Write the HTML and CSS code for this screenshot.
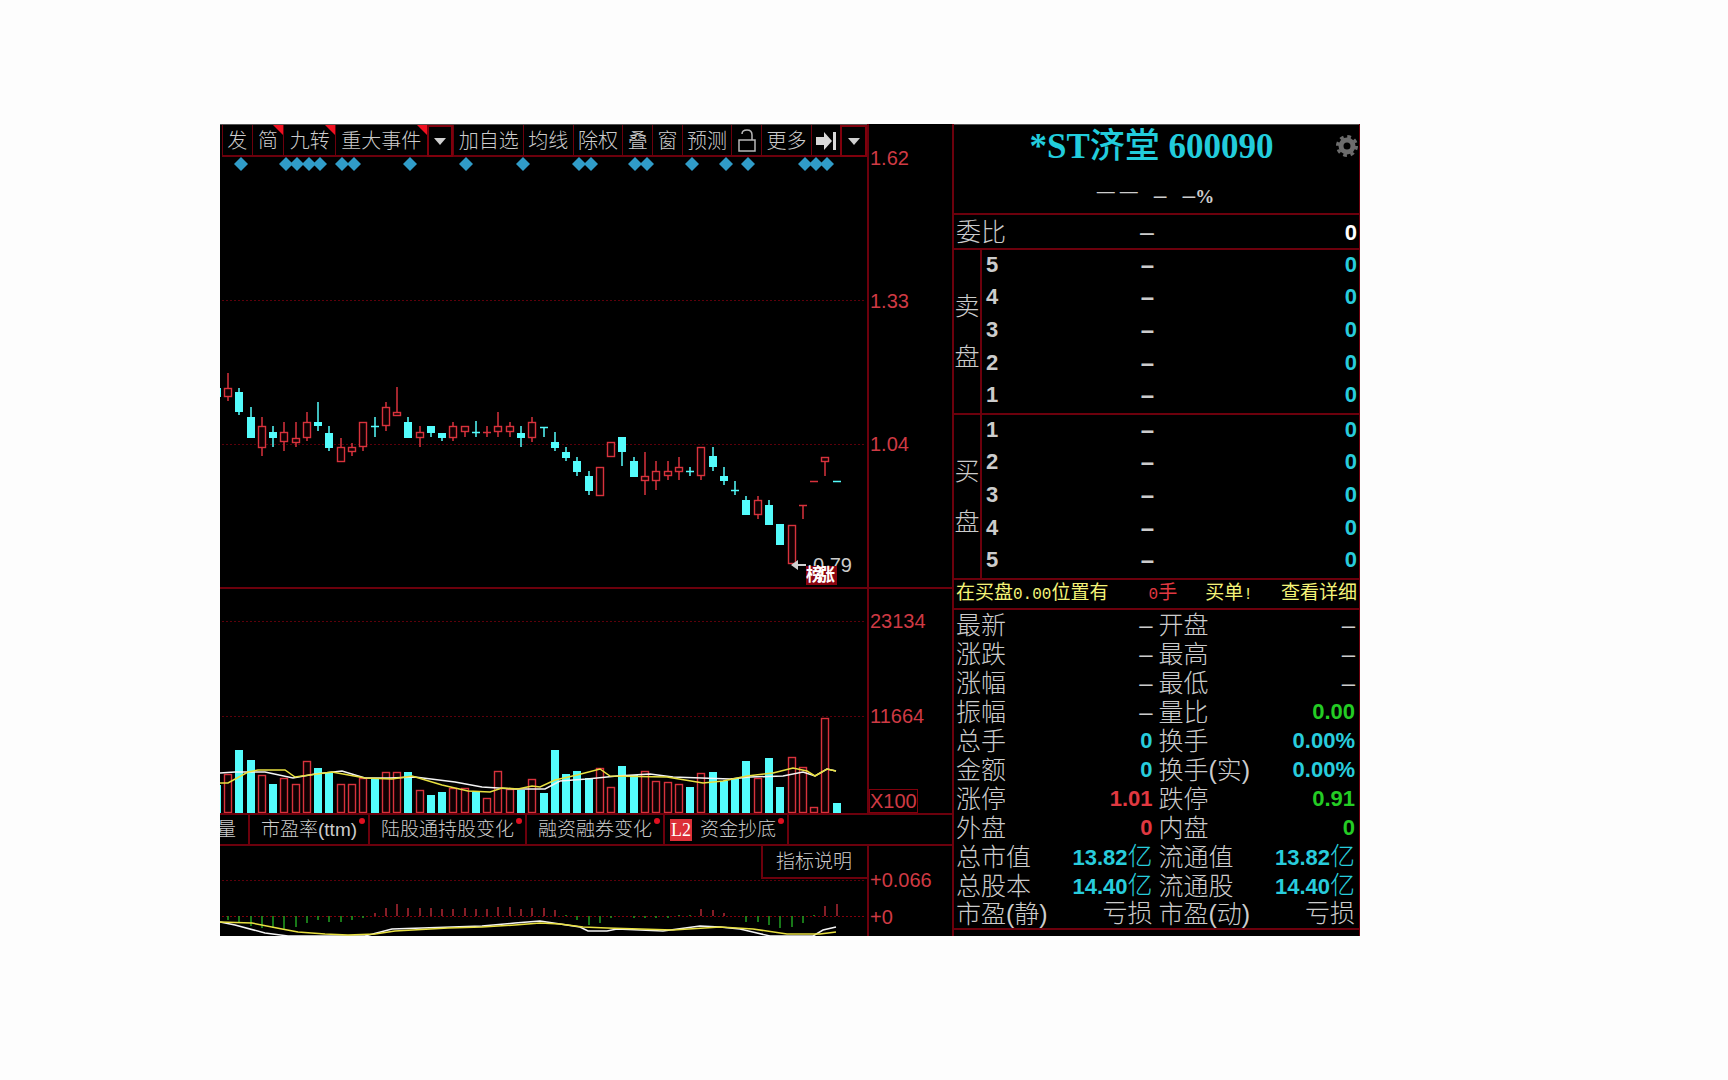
FILE: index.html
```html
<!DOCTYPE html>
<html lang="zh-CN">
<head>
    <meta charset="utf-8">
    <meta name="viewport" content="width=device-width, initial-scale=1">
    <title>*ST济堂 600090</title>
    <link rel="stylesheet" href="styles.css">
</head>
<body>
    <main class="terminal">
        <section class="charts">
            <div class="row row-price">
                <div class="plot">
                    <nav class="toolbar">
                        <button>发</button>
                        <button class="corner">简</button>
                        <button class="corner">九转</button>
                        <button class="corner">重大事件</button>
                        <button class="caret" aria-label="事件菜单"><svg width="12" height="7"><path d="M0 0H12L6 7Z" fill="#d0d0d0"/></svg></button>
                        <button>加自选</button>
                        <button>均线</button>
                        <button>除权</button>
                        <button>叠</button>
                        <button>窗</button>
                        <button>预测</button>
                        <button aria-label="锁定"><svg width="20" height="24" fill="none" stroke="#b8b8b8" stroke-width="1.5"><path d="M2 11H18V22H2ZM5 5Q5 1 10 1Q15 1 15 6V11"/></svg></button>
                        <button>更多</button>
                        <button aria-label="跳到最后"><svg width="20" height="18" fill="#d8d8d8"><path d="M0 5H8V0L16 9L8 18V13H0ZM17 0H20V18H17Z"/></svg></button>
                        <button class="caret" aria-label="更多菜单"><svg width="12" height="7"><path d="M0 0H12L6 7Z" fill="#d0d0d0"/></svg></button>
                    </nav>
                    <svg id="price" class="price-svg" viewBox="220 157 647 430" preserveAspectRatio="none"></svg>
                    <span class="low">0.79</span>
                    <span class="badge"><b>榜</b><b>涨</b></span>
                </div>
                <div class="axis">
                    <span>1.62</span>
                    <span>1.33</span>
                    <span>1.04</span>
                </div>
            </div>
            <div class="row row-volume">
                <svg id="volume" viewBox="220 589 647 224" preserveAspectRatio="none"></svg>
                <div class="axis">
                    <span>23134</span>
                    <span>11664</span>
                    <span class="unit">X100</span>
                </div>
            </div>
            <nav class="tabs">
                <button class="tab-cut"><span>量</span></button>
                <button class="dot">市盈率(ttm)</button>
                <button class="dot">陆股通持股变化</button>
                <button class="dot">融资融券变化</button>
                <button class="dot"><i class="l2">L2</i>资金抄底</button>
            </nav>
            <div class="row row-macd">
                <div class="plot">
                    <svg id="macd" viewBox="220 846 647 90" preserveAspectRatio="none"></svg>
                    <button class="explain">指标说明</button>
                </div>
                <div class="axis">
                    <span>+0.066</span>
                    <span>+0</span>
                </div>
            </div>
        </section>

        <aside class="quote">
            <header class="head">
                <h1>*ST<span>济堂</span> 600090</h1>
                <button class="gear" aria-label="设置">
                    <svg width="24" height="24" viewBox="-12 -12 24 24">
                        <circle r="6" fill="none" stroke="#6c6c6c" stroke-width="5"/>
                        <circle r="9.5" fill="none" stroke="#6c6c6c" stroke-width="3" stroke-dasharray="3.73 3.73"/>
                    </svg>
                </button>
                <p class="last"><span class="wide">— —</span><span>–</span><span>–<b>%</b></span></p>
            </header>
            <div class="ratio"><span>委比</span><span class="nil">–</span><b>0</b></div>
            <table class="book">
                <tr><th rowspan="5">卖<br>盘</th><td>5</td><td class="nil">–</td><td>0</td></tr>
                <tr><td>4</td><td class="nil">–</td><td>0</td></tr>
                <tr><td>3</td><td class="nil">–</td><td>0</td></tr>
                <tr><td>2</td><td class="nil">–</td><td>0</td></tr>
                <tr><td>1</td><td class="nil">–</td><td>0</td></tr>
            </table>
            <table class="book">
                <tr><th rowspan="5">买<br>盘</th><td>1</td><td class="nil">–</td><td>0</td></tr>
                <tr><td>2</td><td class="nil">–</td><td>0</td></tr>
                <tr><td>3</td><td class="nil">–</td><td>0</td></tr>
                <tr><td>4</td><td class="nil">–</td><td>0</td></tr>
                <tr><td>5</td><td class="nil">–</td><td>0</td></tr>
            </table>
            <div class="notice">
                <span>在买盘<i>0.00</i>位置有</span>
                <span class="up"><i>0</i>手</span>
                <span>买单<i>!</i></span>
                <a href="#">查看详细</a>
            </div>
            <table class="stats">
                <tr><th>最新</th><td class="nil">–</td><th>开盘</th><td class="nil">–</td></tr>
                <tr><th>涨跌</th><td class="nil">–</td><th>最高</th><td class="nil">–</td></tr>
                <tr><th>涨幅</th><td class="nil">–</td><th>最低</th><td class="nil">–</td></tr>
                <tr><th>振幅</th><td class="nil">–</td><th>量比</th><td class="down">0.00</td></tr>
                <tr><th>总手</th><td class="flat">0</td><th>换手</th><td class="flat">0.00%</td></tr>
                <tr><th>金额</th><td class="flat">0</td><th>换手<i>(</i>实<i>)</i></th><td class="flat">0.00%</td></tr>
                <tr><th>涨停</th><td class="up">1.01</td><th>跌停</th><td class="down">0.91</td></tr>
                <tr><th>外盘</th><td class="up">0</td><th>内盘</th><td class="down">0</td></tr>
                <tr><th>总市值</th><td class="flat">13.82<em>亿</em></td><th>流通值</th><td class="flat">13.82<em>亿</em></td></tr>
                <tr><th>总股本</th><td class="flat">14.40<em>亿</em></td><th>流通股</th><td class="flat">14.40<em>亿</em></td></tr>
                <tr><th>市盈<i>(</i>静<i>)</i></th><td><em>亏损</em></td><th>市盈<i>(</i>动<i>)</i></th><td><em>亏损</em></td></tr>
            </table>
        </aside>
    </main>
    <script src="charts.js"></script>
</body>
</html>
```

FILE: styles.css
```css
* {
    box-sizing: border-box;
    margin: 0;
    padding: 0;
}
body {
    padding: 124px 368px 144px 220px;
    background: #fdfdfd;
    color: #cccccc;
    font-family: "Liberation Sans", "Noto Sans CJK SC", sans-serif;
}
button {
    background: none;
    border: none;
    color: inherit;
    font-family: inherit;
    font-weight: 300;
    white-space: nowrap;
    cursor: pointer;
}
svg {
    display: block;
}
i, em {
    font-style: normal;
}
b {
    font-weight: 700;
}
.terminal {
    display: grid;
    grid-template-columns: minmax(0, 1fr) 408px;
    background: #000;
}

/* left side: charts */
.row {
    display: grid;
    grid-template-columns: minmax(0, 1fr) 85px;
}
.row > svg, .plot > svg {
    width: 100%;
    height: 100%;
}
.plot {
    position: relative;
}
.row-price {
    height: 463px;
}
.plot > .price-svg {
    height: 430px;
}
.row-volume {
    height: 226px;
    border-top: 2px solid #6c000c;
}
.row-macd {
    height: 90px;
}
.axis {
    display: flex;
    flex-direction: column;
    align-items: flex-start;
    padding: 22px 0 0 1px;
    border-left: 2px solid #6c000c;
    color: #cf3a44;
    font-size: 20px;
    line-height: 24px;
}
.row-price .axis {
    gap: 119px;
}
.row-volume .axis {
    gap: 71px;
    padding-top: 20px;
}
.row-macd .axis {
    gap: 13px;
}
.axis .unit {
    margin: -10px 0 0 -1px;
    border: 1px solid #80000c;
    line-height: 22px;
}
.toolbar {
    display: flex;
    height: 33px;
    padding-left: 2px;
    border-top: 1px solid #555;
}
.toolbar button {
    position: relative;
    display: flex;
    flex: 1 0 auto;
    align-items: center;
    justify-content: center;
    padding: 2px 4px 0;
    border-left: 1px solid #6c000c;
    border-bottom: 2px solid #6c000c;
    font-size: 20px;
    line-height: 28px;
}
.toolbar .corner {
    padding: 2px 5px 0;
}
.toolbar .caret {
    padding: 0 5px;
    border: 2px solid #80000c;
}
.corner::after {
    content: "";
    position: absolute;
    top: 0;
    right: 0;
    border: 5px solid transparent;
    border-top-color: #f01020;
    border-right-color: #f01020;
}
.low {
    position: absolute;
    right: 15px;
    bottom: 10px;
    font-size: 20px;
    line-height: 24px;
}
.badge {
    position: absolute;
    right: 30px;
    bottom: 2px;
    display: flex;
    padding-right: 2px;
    background: #8c0410;
    color: #fff;
    font-size: 18px;
    line-height: 19px;
}
.badge b + b {
    margin-left: -7px;
}
.tabs {
    display: flex;
    height: 33px;
    border-top: 2px solid #6c000c;
    border-bottom: 2px solid #6c000c;
}
.tabs button {
    position: relative;
    padding: 1px 11px 0;
    border-right: 2px solid #6c000c;
    font-size: 19px;
    line-height: 28px;
}
.tabs .tab-cut {
    display: flex;
    justify-content: flex-end;
    width: 30px;
    padding-right: 12px;
    overflow: hidden;
}
.dot::after {
    content: "";
    position: absolute;
    top: 3px;
    right: 3px;
    width: 6px;
    height: 6px;
    border-radius: 3px;
    background: #e01020;
}
.tabs .l2 {
    display: inline-block;
    width: 22px;
    margin: 0 8px 0 -6px;
    background: #dc3038;
    color: #fff;
    font-family: "Liberation Serif", serif;
    font-size: 18px;
    line-height: 22px;
}
.explain {
    position: absolute;
    top: 0;
    right: 0;
    padding: 0 15px 0 13px;
    border-left: 2px solid #6c000c;
    border-bottom: 2px solid #6c000c;
    font-size: 19px;
    line-height: 31px;
}

/* right side: quote panel */
.quote {
    border-left: 2px solid #6c000c;
    border-right: 1px solid #6c000c;
    font-size: 25px;
    font-weight: 300;
}
.head {
    position: relative;
    height: 91px;
    border-top: 1px solid #555;
    border-bottom: 2px solid #6c000c;
}
.head h1 {
    padding: 2px 10px 0 0;
    color: #22ccdc;
    font-family: "Liberation Serif", "Noto Sans CJK SC", serif;
    font-size: 35px;
    line-height: 40px;
    text-align: center;
}
.head h1 span {
    font-weight: 500;
}
.gear {
    position: absolute;
    top: 9px;
    right: 0;
}
.last {
    display: flex;
    justify-content: center;
    gap: 16px;
    padding-right: 2px;
    font-size: 23px;
    line-height: 56px;
}
.last .wide {
    font-size: 18px;
    line-height: 48px;
}
.last b {
    font-family: "Liberation Serif", serif;
    font-size: 19px;
}
.nil {
    font-weight: 400;
}
.ratio {
    display: grid;
    grid-template-columns: 1fr auto 203px;
    height: 35px;
    padding: 0 2px;
    border-bottom: 2px solid #6c000c;
    line-height: 35px;
}
.ratio b {
    color: #fff;
    font-size: 22px;
    text-align: right;
}
.book {
    width: 100%;
    height: 165px;
    border-spacing: 0;
    border-bottom: 2px solid #6c000c;
}
.book th {
    width: 28px;
    border-right: 2px solid #6c000c;
    font-weight: 300;
    line-height: 51px;
}
.book td {
    padding: 0 0 3px 4px;
    font-size: 22px;
    font-weight: bold;
    line-height: 28px;
}
.book td:nth-last-child(2) {
    text-align: center;
}
.book td:last-child {
    width: 140px;
    padding-right: 2px;
    color: #28ccdc;
    text-align: right;
}
.book td:nth-last-child(3) {
    width: 90px;
}
.book .nil, .stats .nil {
    font-size: 24px;
}
.notice {
    display: flex;
    justify-content: space-between;
    height: 30px;
    padding: 0 2px;
    border-bottom: 2px solid #6c000c;
    color: #f4f478;
    font-size: 19px;
    font-weight: 400;
    line-height: 26px;
}
.notice i {
    font-family: "Liberation Mono", monospace;
    font-size: 16px;
}
.notice .up {
    padding-left: 12px;
}
.notice a {
    color: inherit;
    text-decoration: none;
}
.stats {
    width: 100%;
    border-collapse: collapse;
    border-bottom: 2px solid #6c000c;
    table-layout: fixed;
}
.stats tr {
    height: 29px;
}
.stats th {
    padding-left: 2px;
    font-weight: 300;
    line-height: 26px;
    text-align: left;
    white-space: nowrap;
}
.stats td {
    padding-right: 4px;
    font-size: 22px;
    font-weight: bold;
    line-height: 26px;
    text-align: right;
    white-space: nowrap;
}
.stats .nil {
    font-weight: 400;
}
.stats em {
    font-size: 25px;
    font-weight: 300;
}
.up, .stats .up {
    color: #e03840;
}
.down {
    color: #24cc24;
}
.flat {
    color: #28ccdc;
}
```

FILE: charts.js
```js
const UP = '#d8323c'
const DOWN = '#54fcfc'
const GRID = '#5c000a'
const FIRST = 228
const STEP = 11.27

// side, high, body top, body bottom, low, volume top, macd end
const bars = [
    ['r', 373, 388, 396, 401, 774, 920], ['c', 388, 392, 411, 415, 750, 923],
    ['c', 407, 417, 437, 437, 760, 926], ['r', 417, 426, 447, 456, 775, 928],
    ['c', 426, 432, 437, 447, 784, 928], ['r', 422, 432, 441, 451, 778, 929],
    ['r', 422, 438, 442, 447, 784, 927], ['r', 412, 422, 437, 441, 761, 923],
    ['c', 402, 422, 425, 431, 768, 920], ['c', 426, 433, 447, 451, 773, 922],
    ['r', 438, 447, 461, 461, 784, 922], ['r', 443, 447, 451, 456, 784, 920],
    ['r', 422, 422, 446, 451, 778, 918], ['c', 417, 426, 427, 437, 778, 913],
    ['r', 402, 407, 425, 431, 772, 908], ['r', 387, 412, 415, 415, 772, 904],
    ['c', 417, 422, 437, 437, 772, 908], ['r', 426, 432, 437, 447, 790, 908],
    ['c', 426, 426, 432, 437, 795, 908], ['c', 433, 433, 437, 441, 792, 909],
    ['r', 422, 426, 437, 441, 788, 909], ['r', 426, 426, 431, 437, 788, 908],
    ['c', 421, 432, 433, 437, 792, 909], ['r', 426, 432, 433, 437, 798, 909],
    ['r', 412, 426, 431, 437, 771, 907], ['r', 422, 426, 431, 437, 789, 907],
    ['c', 426, 433, 437, 447, 790, 909], ['r', 417, 422, 437, 442, 779, 908],
    ['c', 427, 427, 428, 437, 793, 908], ['c', 432, 442, 447, 451, 750, 910],
    ['c', 447, 452, 457, 461, 774, 915], ['c', 457, 461, 471, 476, 771, 920],
    ['c', 471, 476, 490, 495, 778, 925], ['r', 467, 467, 495, 495, 768, 923],
    ['r', 442, 442, 456, 456, 787, 918], ['c', 437, 437, 451, 466, 766, 916],
    ['c', 457, 461, 476, 476, 775, 918], ['r', 452, 476, 480, 495, 771, 918],
    ['r', 461, 471, 480, 490, 781, 918], ['r', 461, 471, 475, 480, 782, 918],
    ['r', 457, 467, 471, 480, 784, 915], ['c', 467, 471, 472, 476, 787, 915],
    ['r', 447, 447, 475, 480, 773, 909], ['c', 447, 456, 466, 471, 772, 910],
    ['c', 467, 476, 480, 485, 781, 913], ['c', 481, 490, 491, 495, 778, 916],
    ['c', 496, 500, 514, 514, 761, 922], ['r', 496, 500, 514, 519, 778, 922],
    ['c', 500, 505, 524, 524, 758, 925], ['c', 524, 524, 544, 544, 787, 928],
    ['r', 525, 525, 563, 563, 757, 927], ['r', 505, 505, 506, 519, 767, 923],
    ['r', 481, 481, 482, 482, 807, 915], ['r', 457, 457, 461, 476, 718, 906],
    ['c', 481, 481, 482, 482, 803, 904]
]

const events = [241, 286, 297, 309, 320, 342, 354, 410, 466, 523, 579, 591,
    635, 647, 692, 726, 748, 805, 816, 827]

function line(x1, y1, x2, y2, color, width, dash) {
    return `<path d="M${x1} ${y1}L${x2} ${y2}" stroke="${color}" stroke-width="${width}" stroke-dasharray="${dash || 'none'}"/>`
}

function grid(y, color) {
    return line(222, y, 866, y, color || GRID, 1, '2 2')
}

function box(x, top, bottom, side) {
    if (side === 'c') {
        return `<rect x="${x - 4}" y="${top}" width="8" height="${bottom - top + 1}" fill="${DOWN}"/>`
    }
    return `<rect x="${x - 3.5}" y="${top + 0.5}" width="7" height="${bottom - top}" fill="#100002" stroke="${UP}" stroke-width="1.4"/>`
}

function curve(points, color) {
    return `<polyline points="${points}" fill="none" stroke="${color}" stroke-width="1.5"/>`
}

let price = grid(300.5) + grid(444.5)
let volume = grid(621.5) + grid(716.5)
let macd = grid(880.5) + grid(916.5, '#80000c')

events.forEach(x => {
    price += `<path d="M${x - 7} 164L${x} 157L${x + 7} 164L${x} 171Z" fill="#309cc8"/>`
})

price += `<rect x="220" y="388" width="1" height="9" fill="${DOWN}"/>`
volume += `<rect x="220" y="785" width="1" height="28" fill="${DOWN}"/>`

bars.forEach(([side, high, top, bottom, low, vol, hist], i) => {
    const x = Math.round(FIRST + i * STEP)
    const color = side === 'c' ? DOWN : UP
    price += line(x, high, x, low, color, 1.5)
    if (bottom - top < 2) {
        price += line(x - 4, top + 0.5, x + 4, top + 0.5, color, 1.5)
    } else {
        price += box(x, top, bottom, side)
    }
    volume += box(x, vol, 812, side)
    macd += line(x, 916, x, hist, hist < 915 ? '#b02834' : '#20a020', 1.5)
})

// arrow that points at the lowest price
price += '<path d="M791 565L798 560V564H806V566H798V570Z" fill="#d0d0d0"/>'

volume += curve('220,773 235,772 265,772 293,778 315,774 342,771 365,778 390,778 415,777 455,782 482,787 515,789 545,789 560,781 587,779 617,776 650,774 673,777 730,779 750,777 783,776 803,772 815,776 827,769 836,771', '#f4f4f4')
volume += curve('220,783 228,783 248,772 258,770 285,770 295,777 332,772 365,778 392,779 412,776 442,785 468,791 490,792 502,788 518,789 532,786 540,787 555,780 577,775 600,769 610,776 667,777 703,783 723,781 747,776 773,773 793,768 807,771 815,776 827,769 836,771', '#e8e040')

macd += curve('220,922 235,925 265,933 288,936 365,936 392,929 422,928 482,926 515,923 540,921 560,924 580,927 588,931 607,931 617,929 663,931 700,926 720,927 740,929 757,933 770,936 813,936 823,930 836,927', '#f4f4f4')
macd += curve('220,922 252,923 282,929 298,932 325,934 348,935 375,934 395,931 448,928 482,927 515,925 540,923 560,924 583,927 607,928 673,930 720,927 753,929 787,934 820,934 836,932', '#e8e040')

document.getElementById('price').innerHTML = price
document.getElementById('volume').innerHTML = volume
document.getElementById('macd').innerHTML = macd
```
